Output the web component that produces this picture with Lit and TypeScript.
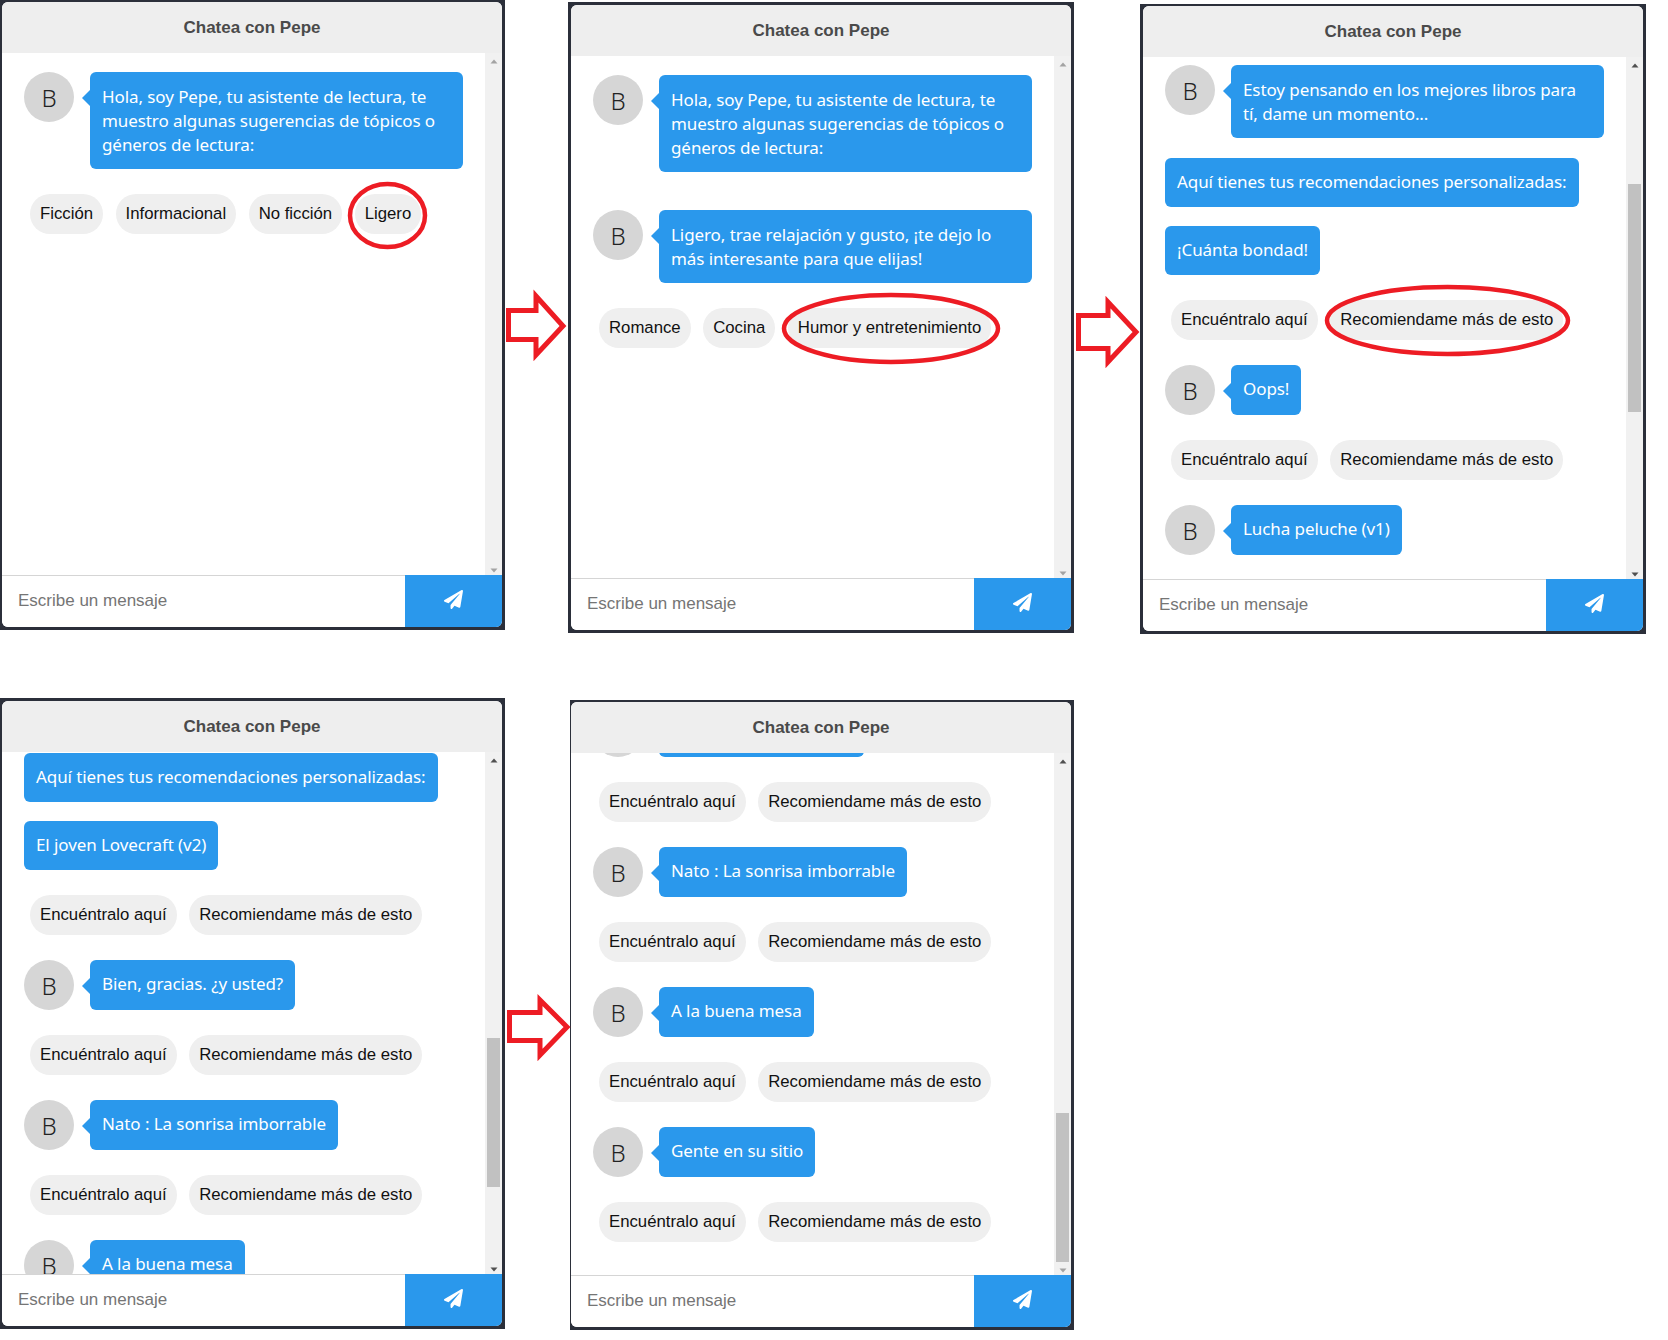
import { LitElement, html, css } from "lit";
import { customElement } from "lit/decorators.js";

type Item =
  | { kind: "msg"; text: string; avatar: boolean; gap?: string }
  | { kind: "chips"; chips: string[] };

interface Panel {
  cls: string;
  offset: number;
  arrowTop: string;
  arrowBottom: string;
  thumb?: [number, number];
  items: Item[];
}

const FIND = ["Encuéntralo aquí", "Recomiendame más de esto"];
const found: Item = { kind: "chips", chips: FIND };
const bot = (text: string, gap?: string): Item => ({ kind: "msg", text, avatar: true, gap });
const plain = (text: string, gap?: string): Item => ({ kind: "msg", text, avatar: false, gap });
const HELLO = "Hola, soy Pepe, tu asistente de lectura, te\nmuestro algunas sugerencias de tópicos o\ngéneros de lectura:";

const ROW1: Panel[] = [
  {
    cls: "p1", offset: 19, arrowTop: "off", arrowBottom: "off",
    items: [bot(HELLO), { kind: "chips", chips: ["Ficción", "Informacional", "No ficción", "Ligero"] }],
  },
  {
    cls: "p2", offset: 19, arrowTop: "off", arrowBottom: "off",
    items: [
      bot(HELLO, "g38"),
      bot("Ligero, trae relajación y gusto, ¡te dejo lo\nmás interesante para que elijas!"),
      { kind: "chips", chips: ["Romance", "Cocina", "Humor y entretenimiento"] },
    ],
  },
  {
    cls: "p3", offset: 8, arrowTop: "on", arrowBottom: "on", thumb: [127, 228],
    items: [
      bot("Estoy pensando en los mejores libros para\ntí, dame un momento...", "g20"),
      plain("Aquí tienes tus recomendaciones personalizadas:", "g19"),
      plain("¡Cuánta bondad!"),
      found,
      bot("Oops!"),
      found,
      bot("Lucha peluche (v1)"),
    ],
  },
];

const ROW2: Panel[] = [
  {
    cls: "p4", offset: 1, arrowTop: "on", arrowBottom: "on", thumb: [286, 149],
    items: [
      plain("Aquí tienes tus recomendaciones personalizadas:", "g19"),
      plain("El joven Lovecraft (v2)"),
      found,
      bot("Bien, gracias. ¿y usted?"),
      found,
      bot("Nato : La sonrisa imborrable"),
      found,
      bot("A la buena mesa"),
    ],
  },
  {
    cls: "p5", offset: -46, arrowTop: "on", arrowBottom: "off", thumb: [360, 149],
    items: [
      bot("Bien, gracias. ¿y usted?"),
      found,
      bot("Nato : La sonrisa imborrable"),
      found,
      bot("A la buena mesa"),
      found,
      bot("Gente en su sitio"),
      found,
    ],
  },
];

const PLANE = "M476 3.2L12.5 270.6c-18.1 10.4-15.8 35.6 2.2 43.2L121 358.4l287.3-253.2c5.5-4.9 13.3 2.6 8.6 8.3L176 407v80.5c0 23.6 28.5 32.9 42.5 15.8L282 426l124.6 52.2c14.2 6 30.4-2.9 33-18.2l72-432C515 7.8 493.3-6.8 476 3.2z";

@customElement("app-root")
export class AppRoot extends LitElement {
  static styles = css`
    :host { display: block; }
    .page { position: relative; width: 1668px; height: 1340px; overflow: hidden; background: #fff; }
    .row { display: flex; align-items: flex-start; }
    .row.first { height: 698px; }
    .panel { border: 3px solid #2b2f3a; background: #2b2f3a; flex: none; }
    .p1 { margin: -1px 0 0 -1px; }
    .p2 { margin: 2px 0 0 63px; }
    .p3 { margin: 4px 0 0 66px; border-top-width: 2px; }
    .p4 { margin: 0 0 0 -1px; }
    .p5 { margin: 2px 0 0 65px; border-top-width: 2px; border-left-width: 1px; }
    .inner { width: 500px; height: 625px; display: flex; flex-direction: column; background: #fff; border-radius: 6px; overflow: hidden; }
    .head { height: 51px; flex: none; background: #eee; display: flex; align-items: center; justify-content: center;
      font: bold 17px "Liberation Sans", Arial, sans-serif; color: #4a4a4a; padding-top: 1px; box-sizing: border-box; }
    .body { flex: 1; min-height: 0; display: flex; overflow: hidden; }
    .list { flex: 1; min-width: 0; display: flex; flex-direction: column; align-items: flex-start; padding: 0 22px; box-sizing: border-box; }
    .msg { display: flex; align-items: stretch; gap: 16px; margin-bottom: 25px; flex: none; max-width: 100%; }
    .msg.g19 { margin-bottom: 19px; }
    .msg.g20 { margin-bottom: 20px; }
    .msg.g38 { margin-bottom: 38px; }
    .avatar { width: 50px; height: 50px; border-radius: 50%; background: #d6d6d6; color: #222; flex: none;
      display: flex; align-items: center; justify-content: center; font: 300 24px "Noto Sans", sans-serif; }
    .bubble { position: relative; background: #2a98ec; color: #fff; border-radius: 6px; padding: 12px 12px 13px;
      font: 400 17px/24px "Noto Sans", sans-serif; letter-spacing: -0.08px; white-space: pre-line; }
    .bubble.wide { width: 349px; padding: 13px 12px 12px; }
    .msg.lone .bubble { white-space: nowrap; }
    .msg:not(.lone) .bubble::before { content: ""; position: absolute; left: -8px; top: 18px; border-style: solid;
      border-width: 8px 8px 8px 0; border-color: transparent #2a98ec transparent transparent; }
    .chips { display: flex; gap: 12.5px; margin: 0 0 25px 6px; flex: none; }
    .chip { height: 40px; padding: 0 10px; display: flex; align-items: center; background: #efefef; border-radius: 20px;
      font: 16.75px "Liberation Sans", Arial, sans-serif; color: #111; white-space: nowrap; }
    .bar { width: 17px; flex: none; background: #f1f1f1; display: flex; flex-direction: column; align-items: center; }
    .arrow { flex: none; height: 17px; display: flex; align-items: center; justify-content: center; }
    .arrow.down { height: 10px; margin-top: auto; }
    .arrow svg { display: block; fill: #a3a3a3; }
    .arrow.on svg { fill: #505050; }
    .thumb { width: 13px; background: #c1c1c1; flex: none; }
    .foot { height: 52px; flex: none; display: flex; }
    .field { flex: 1; min-width: 0; border: none; border-top: 1px solid #d5d5d5; outline: none; padding: 0 0 1px 16px; margin: 0;
      box-sizing: border-box; background: #fff; font: 17px "Liberation Sans", Arial, sans-serif; color: #222; }
    .field::placeholder { color: #757575; opacity: 1; }
    .send { width: 97px; flex: none; background: #2a98ec; border: none; padding: 0 0 3px; margin: 0; display: flex; align-items: center; justify-content: center; }
    .send svg { width: 19px; height: 19px; display: block; fill: #fff; }
    .marks { position: absolute; left: 0; top: 0; width: 1668px; height: 1340px; pointer-events: none; }
    .marks ellipse { fill: none; stroke: #ed1c24; stroke-width: 4.5; }
    .marks polygon { fill: none; stroke: #ed1c24; stroke-width: 5; stroke-linejoin: miter; }
  `;

  private renderItem(i: Item) {
    if (i.kind === "chips") {
      return html`<div class="chips">${i.chips.map((c) => html`<div class="chip">${c}</div>`)}</div>`;
    }
    return html`<div class="msg ${i.avatar ? "" : "lone"} ${i.gap ?? ""}">
      ${i.avatar ? html`<div class="avatar">B</div>` : null}
      <div class="bubble ${i.text.includes("\n") ? "wide" : ""}">${i.text}</div>
    </div>`;
  }

  private renderPanel(p: Panel) {
    return html`<section class="panel ${p.cls}">
      <div class="inner">
        <header class="head">Chatea con Pepe</header>
        <div class="body">
          <div class="list" style="margin-top:${p.offset}px">${p.items.map((i) => this.renderItem(i))}</div>
          <div class="bar">
            <div class="arrow ${p.arrowTop}"><svg width="8" height="5" viewBox="0 0 8 5"><path d="M4 0.5L7.5 4.5H0.5z"/></svg></div>
            ${p.thumb ? html`<div class="thumb" style="margin-top:${p.thumb[0] - 17}px;height:${p.thumb[1]}px"></div>` : null}
            <div class="arrow down ${p.arrowBottom}"><svg width="8" height="5" viewBox="0 0 8 5"><path d="M4 4.5L0.5 0.5H7.5z"/></svg></div>
          </div>
        </div>
        <div class="foot">
          <input class="field" placeholder="Escribe un mensaje" />
          <button class="send"><svg viewBox="0 0 512 512"><path d="${PLANE}"/></svg></button>
        </div>
      </div>
    </section>`;
  }

  render() {
    return html`<div class="page">
      <div class="row first">${ROW1.map((p) => this.renderPanel(p))}</div>
      <div class="row">${ROW2.map((p) => this.renderPanel(p))}</div>
      <svg class="marks" viewBox="0 0 1668 1340">
        <ellipse cx="387.5" cy="215.5" rx="37.5" ry="31.5"/>
        <ellipse cx="891" cy="328.5" rx="107" ry="33.5"/>
        <ellipse cx="1447.5" cy="320.5" rx="120.5" ry="33.5"/>
        <polygon points="508.5,310.5 536,310.5 536,296 563,326 536,355 536,339.5 508.5,339.5"/>
        <polygon points="1078.5,315.5 1108,315.5 1108,302 1136,332 1108,362 1108,348.5 1078.5,348.5"/>
        <polygon points="509.5,1012.5 540,1012.5 540,1000 567,1027 540,1055 540,1040.5 509.5,1040.5"/>
      </svg>
    </div>`;
  }
}
